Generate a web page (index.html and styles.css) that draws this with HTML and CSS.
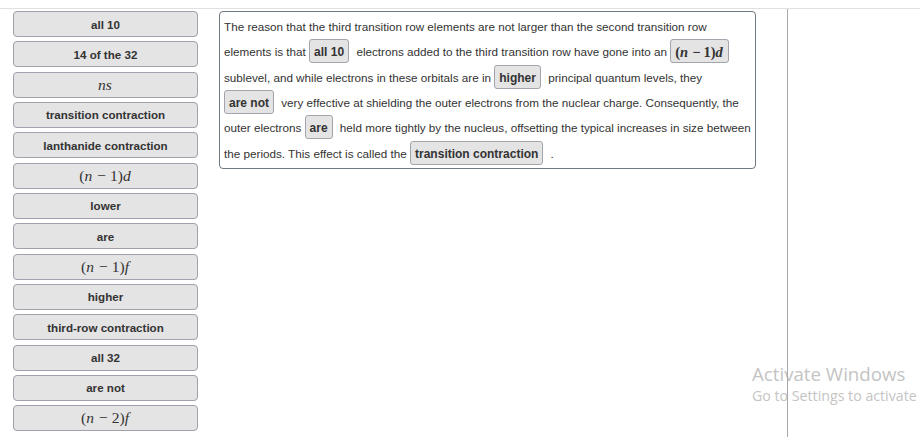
FILE: index.html
```html
<!DOCTYPE html>
<html>
<head>
<meta charset="utf-8">
<link rel="stylesheet" href="styles.css">
</head>
<body>
<div class="page">
  <div class="bank">
    <div class="chip">all 10</div>
    <div class="chip">14 of the 32</div>
    <div class="chip"><span class="math"><i>ns</i></span></div>
    <div class="chip">transition contraction</div>
    <div class="chip">lanthanide contraction</div>
    <div class="chip"><span class="math">(<i>n</i><span class="op">−</span>1)<i>d</i></span></div>
    <div class="chip">lower</div>
    <div class="chip">are</div>
    <div class="chip"><span class="math">(<i>n</i><span class="op">−</span>1)<i>f</i></span></div>
    <div class="chip">higher</div>
    <div class="chip">third-row contraction</div>
    <div class="chip">all 32</div>
    <div class="chip">are not</div>
    <div class="chip"><span class="math">(<i>n</i><span class="op">−</span>2)<i>f</i></span></div>
  </div>
  <div class="answer">
    The reason that the third transition row elements are not larger than the second transition row<br>
    elements is that <span class="slot">all 10</span> electrons added to the third transition row have gone into an <span class="slot"><span class="math bold">(<i>n</i><span class="op">−</span>1)<i>d</i></span></span><br>
    sublevel, and while electrons in these orbitals are in <span class="slot">higher</span> principal quantum levels, they<br>
    <span class="slot">are not</span> very effective at shielding the outer electrons from the nuclear charge. Consequently, the<br>
    outer electrons <span class="slot">are</span> held more tightly by the nucleus, offsetting the typical increases in size between<br>
    the periods. This effect is called the <span class="slot">transition contraction</span> .
  </div>
  <div class="divider"></div>
</div>
<div class="watermark">
  <div class="wm-title">Activate Windows</div>
  <div class="wm-sub">Go to Settings to activate</div>
</div>
</body>
</html>
```

FILE: styles.css
```css
html, body {
  margin: 0;
  padding: 0;
  background: #ffffff;
  overflow: hidden;
}
body {
  font-family: "Liberation Sans", Arial, sans-serif;
  color: #333333;
  font-size: 12px;
}
.page {
  margin-top: 8px;
  border-top: 1px solid #e0e0e0;
  height: 429px;
  box-sizing: border-box;
  padding: 2px 0 0 13px;
  display: flex;
  align-items: flex-start;
}
.bank {
  width: 185px;
  display: flex;
  flex-direction: column;
  gap: 4.33px;
  flex: none;
}
.chip {
  height: 26px;
  box-sizing: border-box;
  background: #e4e4e4;
  border: 1px solid #9fa1ab;
  border-radius: 4px;
  display: flex;
  align-items: center;
  justify-content: center;
  font-weight: bold;
  font-size: 11.6px;
  color: #333333;
}
.math {
  font-family: "Liberation Serif", "Times New Roman", serif;
  font-size: 15.5px;
  font-weight: normal;
  color: #333333;
  white-space: nowrap;
}
.math i {
  font-style: italic;
  margin-right: 1px;
}
.math .op {
  margin: 0 4px;
}
.math.bold {
  font-weight: bold;
  font-size: 14.5px;
}
.math.bold .op {
  margin: 0 3px;
}
.answer {
  margin-left: 21px;
  width: 537px;
  flex: none;
  box-sizing: border-box;
  border: 1px solid #707880;
  border-radius: 4px;
  padding: 2px 4px 2px 4px;
  line-height: 25.33px;
  font-size: 11.7px;
  color: #333333;
  white-space: nowrap;
}
.slot {
  display: inline-block;
  box-sizing: border-box;
  height: 24px;
  line-height: 20px;
  padding: 2px 4px 0 4px;
  background: #e4e4e4;
  border: 1px solid #a3a5ad;
  border-radius: 3px;
  font-weight: bold;
  font-size: 12px;
  vertical-align: top;
  margin-right: 4px;
}
.divider {
  margin-left: 31px;
  margin-top: -2px;
  align-self: stretch;
  border-left: 1px solid #a8a8a8;
  position: relative;
  z-index: 2;
}
.watermark {
  position: absolute;
  left: 752px;
  top: 362px;
  color: #c4c4c4;
  font-family: "Open Sans", "Noto Sans", sans-serif;
  white-space: nowrap;
  z-index: 1;
}
.wm-title {
  font-size: 18.7px;
  line-height: 24px;
}
.wm-sub {
  font-size: 14.2px;
  line-height: 20px;
}
```
